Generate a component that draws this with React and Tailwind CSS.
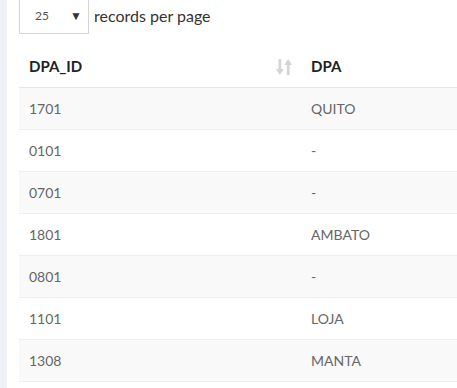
import React from 'react'

const rows = [
  { id: '1701', dpa: 'QUITO' },
  { id: '0101', dpa: '-' },
  { id: '0701', dpa: '-' },
  { id: '1801', dpa: 'AMBATO' },
  { id: '0801', dpa: '-' },
  { id: '1101', dpa: 'LOJA' },
  { id: '1308', dpa: 'MANTA' },
]

const SortIcon = () => (
  <svg width="16" height="18" viewBox="0 0 16 18" className="text-[#d4d4d4]">
    {/* down arrow */}
    <rect x="2.5" y="1" width="2.8" height="12" fill="currentColor" />
    <path d="M0 11 H7.8 L3.9 17 Z" fill="currentColor" />
    {/* up arrow */}
    <rect x="10.8" y="5" width="2.8" height="12" fill="currentColor" />
    <path d="M8.3 7 H16 L12.2 1 Z" fill="currentColor" />
  </svg>
)

const App = () => {
  return (
    <div className="flex h-[388px] w-[457px] overflow-hidden bg-white" style={{ fontFamily: 'Lato, "Open Sans", sans-serif' }}>

      {/* Page gutter */}
      <div className="w-[7px] shrink-0 bg-[#eef1f5]" />

      <div className="flex-1 pl-3 -mt-[2px]">

        {/* Length menu */}
        <div className="flex items-center gap-[5px]">
          <div className="flex h-[36px] w-[70px] items-center justify-between border border-[#d5d5d5] pl-[15px] pr-[6px]">
            <span className="text-[12px] text-[#555]">25</span>
            <span className="text-[12px] text-[#333]">▼</span>
          </div>
          <span className="text-[16px] text-[#333]">records per page</span>
        </div>

        {/* Table */}
        <div className="mt-[12px] w-[460px]">
          <div className="flex h-[42px] items-center border-b border-[#e6e6e6] text-[15px] font-bold text-[#222]">
            <div className="flex w-[282px] items-center justify-between pl-[10px] pr-[9px]">
              <span>DPA_ID</span>
              <SortIcon />
            </div>
            <div className="pl-[10px]">DPA</div>
          </div>

          {rows.map((r, i) => (
            <div
              key={r.id}
              className={`flex h-[42px] items-center border-b border-[#eeeeee] text-[14px] text-[#666] ${i % 2 === 0 ? 'bg-[#f9f9f9]' : 'bg-white'}`}
            >
              <div className="w-[282px] pl-[10px]">{r.id}</div>
              <div className="pl-[10px]">{r.dpa}</div>
            </div>
          ))}
        </div>

      </div>
    </div>
  )
}

export default App
